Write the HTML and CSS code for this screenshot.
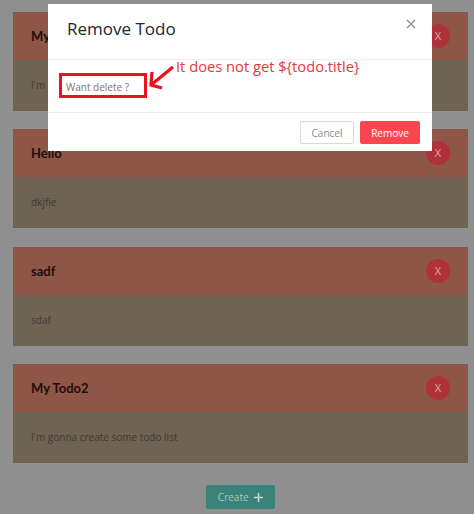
FILE: index.html
```html
<!DOCTYPE html>
<html>
	<head>
		<meta charset="utf-8" />
		<title>Todo</title>
		<link rel="stylesheet" href="styles.css">
	</head>
	<body>
		<div class="list">
			<div class="card">
				<div class="card-head"><h3>My Todo</h3><span class="del">X</span></div>
				<div class="card-body">I'm gonna create some todo list</div>
			</div>
			<div class="card">
				<div class="card-head"><h3>Hello</h3><span class="del">X</span></div>
				<div class="card-body">dkjfie</div>
			</div>
			<div class="card">
				<div class="card-head"><h3>sadf</h3><span class="del">X</span></div>
				<div class="card-body">sdaf</div>
			</div>
			<div class="card">
				<div class="card-head"><h3>My Todo2</h3><span class="del">X</span></div>
				<div class="card-body">I'm gonna create some todo list</div>
			</div>
		</div>
		<div class="create-row">
			<button class="create">Create
				<svg class="plus" width="9" height="9" viewBox="0 0 9 9"><path d="M4.5 0V9M0 4.5H9" stroke="#c6dad6" stroke-width="1.5" fill="none"/></svg>
			</button>
		</div>

		<div class="modal">
			<div class="modal-head">
				<h2>Remove Todo</h2>
				<svg class="close" width="10" height="10" viewBox="0 0 10 10"><path d="M1 1L9 9M9 1L1 9" stroke="#8a8a8a" stroke-width="1.1" fill="none"/></svg>
			</div>
			<div class="modal-body">Want delete ?</div>
			<div class="modal-foot">
				<button class="btn-cancel">Cancel</button>
				<button class="btn-remove">Remove</button>
			</div>
		</div>

		<!-- red annotation drawn on top of the screenshot -->
		<div class="mark-box"></div>
		<svg class="mark-arrow" width="26" height="26" viewBox="0 0 26 26">
			<path d="M25 2L3 20M4 7L3 20L14 23" stroke="#e8131f" stroke-width="3.2" fill="none"/>
		</svg>
		<div class="mark-text">It does not get ${todo.title}</div>
	</body>
</html>
```

FILE: styles.css
```css
*{
	margin: 0;
	padding: 0;
	box-sizing: border-box;
}

body{
	width: 474px;
	height: 514px;
	overflow: hidden;
	background-color: #8f8f8f;
	font-family: "Open Sans", "Noto Sans", sans-serif;
	position: relative;
}

.list{
	padding: 12px 6px 0 13px;
	display: flex;
	flex-direction: column;
	gap: 18.4px;
}

.card{
	height: 99px;
}

.card-head{
	height: 48px;
	padding: 0 18px;
	background-color: #8d5647;
	display: flex;
	align-items: center;
	justify-content: space-between;
}

.card-head h3{
	font-family: "Lato", sans-serif;
	font-size: 13px;
	font-weight: 700;
	color: #1d0f0c;
}

.del{
	width: 24px;
	height: 24px;
	border-radius: 50%;
	background-color: #b03238;
	color: #d9a9a9;
	font-size: 11px;
	line-height: 24px;
	text-align: center;
}

.card-body{
	height: 51px;
	padding: 0 18px;
	background-color: #6f6354;
	color: #3f3a33;
	font-size: 10px;
	line-height: 51px;
}

.create-row{
	padding-top: 22px;
	display: flex;
	justify-content: center;
}

.create{
	width: 69px;
	height: 24px;
	margin-left: 7px;
	border: none;
	border-radius: 2px;
	background-color: #3a8378;
	color: #a8c6c0;
	font-family: inherit;
	font-size: 10px;
}

.plus{
	margin-left: 3px;
	vertical-align: -1px;
}

.modal{
	position: absolute;
	left: 48px;
	top: 4px;
	width: 384px;
	height: 147px;
	background-color: #fff;
	display: flex;
	flex-direction: column;
}

.modal-head{
	height: 56px;
	padding: 0 16px 0 19px;
	border-bottom: 1px solid #efefef;
	display: flex;
	justify-content: space-between;
}

.modal-head h2{
	font-size: 17px;
	font-weight: 400;
	color: #23262b;
	line-height: 49px;
}

.close{
	margin-top: 15px;
}

.modal-body{
	height: 53px;
	padding: 0 18px;
	border-bottom: 1px solid #efefef;
	color: #77776f;
	font-size: 10px;
	line-height: 54px;
}

.modal-foot{
	flex: 1;
	padding: 8px 12px 0 0;
	display: flex;
	justify-content: flex-end;
	gap: 6px;
}

.modal-foot button{
	width: 54px;
	height: 23px;
	border-radius: 2px;
	font-family: inherit;
	font-size: 10px;
}

.btn-cancel{
	background-color: #fff;
	border: 1px solid #d9d9d9;
	color: #8a8a8a;
}

.modal-foot .btn-remove{
	width: 60px;
	background-color: #fb4550;
	border: none;
	color: #fff;
}

.mark-box{
	position: absolute;
	left: 59px;
	top: 73px;
	width: 88px;
	height: 25px;
	border: 3px solid #e8131f;
}

.mark-arrow{
	position: absolute;
	left: 148px;
	top: 65px;
}

.mark-text{
	position: absolute;
	left: 176px;
	top: 55px;
	color: #ea3441;
	font-size: 14.7px;
	line-height: 22px;
	white-space: nowrap;
}
```
